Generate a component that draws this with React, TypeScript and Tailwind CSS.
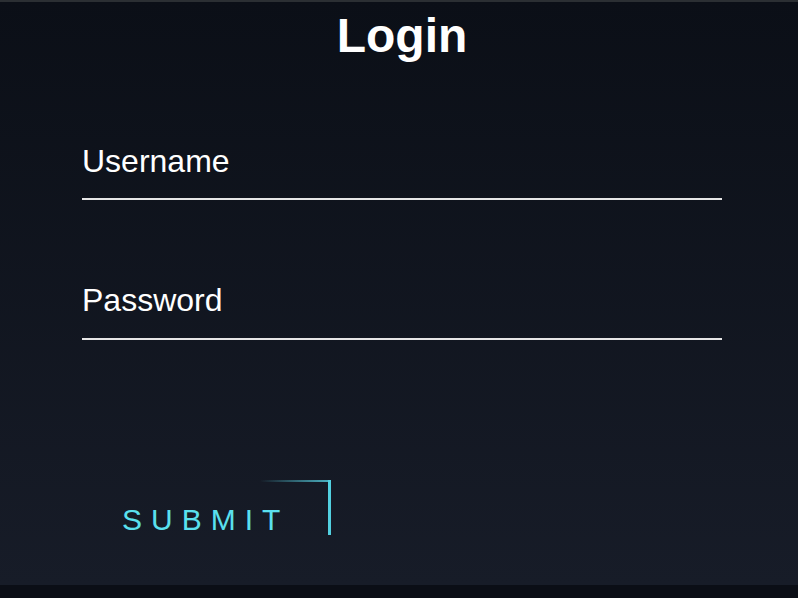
export default function App() {
  return (
    <div className="w-full h-[598px] flex flex-col bg-[#0b0e16] font-['Liberation_Sans',Arial,sans-serif] overflow-hidden">
      <div className="h-[2px] bg-[#2b2f33]" />
      <main className="h-[583px] bg-gradient-to-b from-[#0b0f17] to-[#171c28] flex flex-col">
        <h1 className="mt-[10px] text-center text-white font-bold text-[48px] leading-[47px] pl-[6px]">Login</h1>

        <form className="ml-[82px] mr-[76px] mt-[87px] flex flex-col">
          <div className="text-white text-[32px] leading-[30px] pb-[22px] border-b-2 border-[#e6e6e6]">
            Username
          </div>
          <div className="mt-[85px] text-white text-[32px] leading-[30px] pb-[23px] border-b-2 border-[#e6e6e6]">
            Password
          </div>

          <div className="mt-[140px]">
            <button
              type="button"
              className="relative h-[55px] w-[249px] pl-[40px] pt-[25px] text-left border-r-[3px] border-[#52d0e0] text-[#5ae0ee] text-[30px] leading-[28px] tracking-[9px]"
            >
              SUBMIT
              <span className="absolute top-0 right-0 w-[68px] h-[2px] bg-gradient-to-r from-transparent to-[#4aaebe]" />
            </button>
          </div>
        </form>
      </main>
    </div>
  );
}
